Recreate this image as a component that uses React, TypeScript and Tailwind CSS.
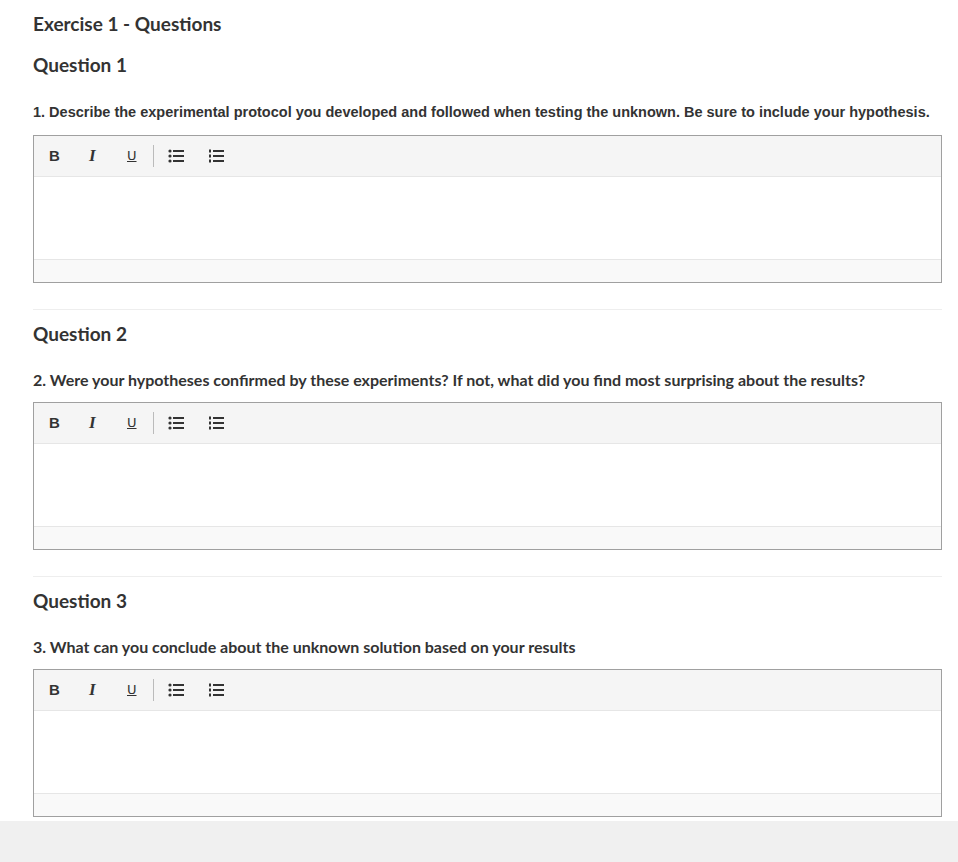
const Editor = () => (
  <div className="border border-[#a0a0a0] w-[909px]">
    <div className="h-[41px] bg-[#f5f5f5] border-b border-[#e6e6e6] flex items-center pl-[15px] text-[#333]">
      <span className="w-[40px] text-[15px] font-bold" style={{ fontFamily: "'Liberation Sans', sans-serif" }}>B</span>
      <span className="w-[38px] text-[17px] italic font-bold" style={{ fontFamily: "'Liberation Serif', serif" }}>I</span>
      <span className="w-[26px] text-[13px] underline" style={{ fontFamily: "'DejaVu Sans', sans-serif" }}>U</span>
      <span className="h-[22px] w-px bg-[#bbb] mr-[14px]" />
      <svg width="16" height="14" viewBox="0 0 16 14" className="mr-[24px]" fill="#333">
        <circle cx="2" cy="2" r="1.6" /><circle cx="2" cy="7" r="1.6" /><circle cx="2" cy="12" r="1.6" />
        <rect x="5" y="1" width="11" height="2" /><rect x="5" y="6" width="11" height="2" /><rect x="5" y="11" width="11" height="2" />
      </svg>
      <svg width="16" height="14" viewBox="0 0 16 14" fill="#333">
        <rect x="1" y="0.5" width="2" height="3" /><rect x="1" y="5.5" width="2" height="3" /><rect x="1" y="10.5" width="2" height="3" />
        <rect x="5" y="1" width="11" height="2" /><rect x="5" y="6" width="11" height="2" /><rect x="5" y="11" width="11" height="2" />
      </svg>
    </div>
    <div className="h-[82px] bg-white" />
    <div className="h-[23px] bg-[#f9f9f9] border-t border-[#e6e6e6]" />
  </div>
);

const lato = { fontFamily: "Lato, sans-serif" };

export default function App() {
  return (
    <div className="relative min-h-[862px] bg-white text-[#2d3b45]" style={lato}>
      <div className="pl-[33px] pr-[17px] pt-[13px]">
        <h1 className="text-[19px] font-bold text-[#333] leading-[22px]">Exercise 1 - Questions</h1>
        <h2 className="text-[19px] font-bold text-[#333] mt-[19px] leading-[22px]">Question 1</h2>
        <p className="mt-[26px] text-[14.5px] font-bold text-[#333] leading-[20px] w-[900px]" style={{ fontFamily: "'Liberation Sans', Arial, sans-serif" }}>
          1. Describe the experimental protocol you developed and followed when testing the unknown. Be sure to include your hypothesis.
        </p>
        <div className="mt-[13px]"><Editor /></div>
        <div className="border-t border-[#eee] mt-[26px] w-[909px]" />
        <h2 className="text-[19px] font-bold text-[#333] mt-[13px] leading-[22px]">Question 2</h2>
        <p className="mt-[25px] text-[16px] font-bold text-[#333] leading-[20px]">
          2. Were your hypotheses confirmed by these experiments? If not, what did you find most surprising about the results?
        </p>
        <div className="mt-[12px]"><Editor /></div>
        <div className="border-t border-[#eee] mt-[26px] w-[909px]" />
        <h2 className="text-[19px] font-bold text-[#333] mt-[13px] leading-[22px]">Question 3</h2>
        <p className="mt-[25px] text-[16px] font-bold text-[#333] leading-[20px]">
          3. What can you conclude about the unknown solution based on your results
        </p>
        <div className="mt-[12px]"><Editor /></div>
      </div>
      <div className="absolute left-0 right-0 top-[821px] bottom-0 bg-black/[0.06]" />
    </div>
  );
}
